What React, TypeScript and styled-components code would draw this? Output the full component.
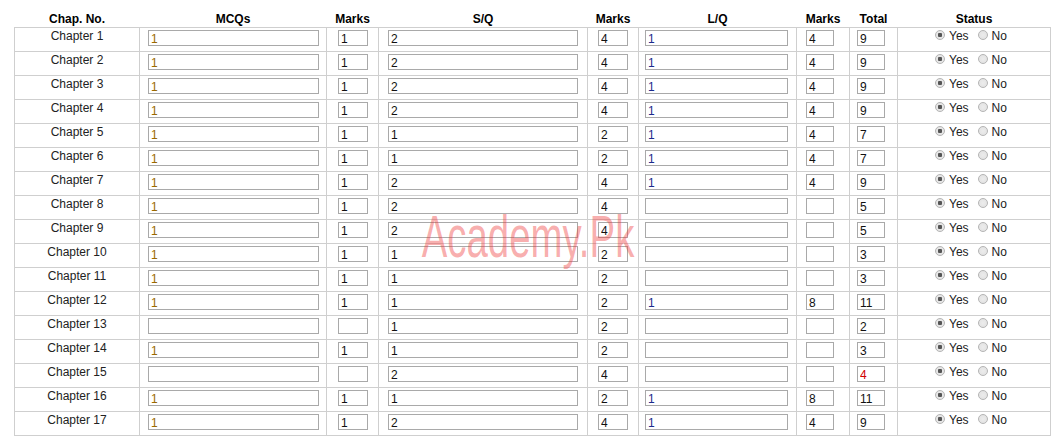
import React from "react";
import styled, { createGlobalStyle } from "styled-components";

const Global = createGlobalStyle`
  html, body { margin: 0; padding: 0; background: #fff; }
  body { font-family: "Liberation Sans", Arial, sans-serif; font-size: 12px; color: #222; }
`;

const Page = styled.div`
  position: relative;
  padding: 0 0 0 14px;
  width: 1056px;
  height: 437px;
  box-sizing: border-box;
  overflow: hidden;
`;

const Table = styled.table`
  border-collapse: collapse;
  table-layout: fixed;
  width: 1036px;
`;

const HeadCell = styled.th<{ w: number }>`
  width: ${(p) => p.w}px;
  font-weight: bold;
  font-size: 12px;
  color: #000;
  text-align: center;
  padding: 12px 0 0 0;
  height: 15px;
  line-height: 14px;
  vertical-align: top;
`;

const Row = styled.tr`
  height: 24px;
`;

const Cell = styled.td<{ pad?: number }>`
  border: 1px solid #cfcfcf;
  padding: 0 0 0 ${(p) => p.pad ?? 0}px;
  height: 23px;
  box-sizing: border-box;
  vertical-align: top;
`;

const TextCell = styled(Cell)`
  text-align: center;
  padding-top: 1px;
  line-height: 14px;
  color: #222;
`;

const Field = styled.input<{ w: number; tone?: string }>`
  display: block;
  box-sizing: border-box;
  width: ${(p) => p.w}px;
  height: 16px;
  margin: 2px 0 0 0;
  padding: 1px 2px 0;
  border: 1px solid #a9a9a9;
  border-radius: 0;
  font-family: "Liberation Sans", Arial, sans-serif;
  font-size: 12px;
  line-height: 13px;
  color: ${(p) => p.tone ?? "#111"};
  background: #fff;
  outline: none;
`;

const StatusGroup = styled.div`
  display: flex;
  justify-content: center;
  align-items: center;
  gap: 0;
  padding-top: 1px;
  margin-left: -6px;
  line-height: 14px;
  color: #222;
`;

const Option = styled.label`
  display: inline-flex;
  align-items: center;
  margin-right: 9px;
  font-size: 12px;
  &:last-child { margin-right: 0; }
`;

const Dot = styled.span<{ on?: boolean }>`
  display: inline-block;
  box-sizing: border-box;
  width: 10px;
  height: 10px;
  border-radius: 50%;
  border: 1px solid #b5b5b5;
  background: radial-gradient(circle, ${(p) => (p.on ? "#555 0 2px, #e6e6e6 2.5px" : "#ececec 0, #e0e0e0 100%")});
  margin-right: 4px;
  margin-top: -2px;
`;

const Watermark = styled.div`
  position: absolute;
  left: 528px;
  top: 241px;
  transform: translate(-50%, -56%) scaleX(0.64);
  font-family: "Liberation Sans", Arial, sans-serif;
  font-size: 60px;
  color: rgba(240, 60, 60, 0.42);
  white-space: nowrap;
  pointer-events: none;
  line-height: 1;
`;

type R = [string, string, string, string, string, string, string];

const rows: R[] = [
  ["1", "1", "2", "4", "1", "4", "9"],
  ["1", "1", "2", "4", "1", "4", "9"],
  ["1", "1", "2", "4", "1", "4", "9"],
  ["1", "1", "2", "4", "1", "4", "9"],
  ["1", "1", "1", "2", "1", "4", "7"],
  ["1", "1", "1", "2", "1", "4", "7"],
  ["1", "1", "2", "4", "1", "4", "9"],
  ["1", "1", "2", "4", "", "", "5"],
  ["1", "1", "2", "4", "", "", "5"],
  ["1", "1", "1", "2", "", "", "3"],
  ["1", "1", "1", "2", "", "", "3"],
  ["1", "1", "1", "2", "1", "8", "11"],
  ["", "", "1", "2", "", "", "2"],
  ["1", "1", "1", "2", "", "", "3"],
  ["", "", "2", "4", "", "", "4"],
  ["1", "1", "1", "2", "1", "8", "11"],
  ["1", "1", "2", "4", "1", "4", "9"],
];

const widths = [125, 187, 52, 209, 51, 158, 53, 48, 153];
const heads = ["Chap. No.", "MCQs", "Marks", "S/Q", "Marks", "L/Q", "Marks", "Total", "Status"];
const fields = [
  { pad: 8, w: 171, tone: "#9a6a00" },
  { pad: 11, w: 30 },
  { pad: 9, w: 190 },
  { pad: 10, w: 30 },
  { pad: 6, w: 143, tone: "#1c2a8c" },
  { pad: 9, w: 28 },
  { pad: 7, w: 28 },
];

export default function App() {
  return (
    <Page>
      <Global />
      <Table>
        <thead>
          <tr>
            {heads.map((h, i) => (
              <HeadCell key={i} w={widths[i]}>{h}</HeadCell>
            ))}
          </tr>
        </thead>
        <tbody>
          {rows.map((r, i) => (
            <Row key={i}>
              <TextCell>Chapter {i + 1}</TextCell>
              {r.map((v, j) => (
                <Cell key={j} pad={fields[j].pad}>
                  <Field
                    w={fields[j].w}
                    tone={j === 6 && i === 14 ? "#d00000" : fields[j].tone}
                    defaultValue={v}
                    readOnly
                  />
                </Cell>
              ))}
              <Cell>
                <StatusGroup>
                  <Option><Dot on />Yes</Option>
                  <Option><Dot />No</Option>
                </StatusGroup>
              </Cell>
            </Row>
          ))}
        </tbody>
      </Table>
      <Watermark>Academy.Pk</Watermark>
    </Page>
  );
}
